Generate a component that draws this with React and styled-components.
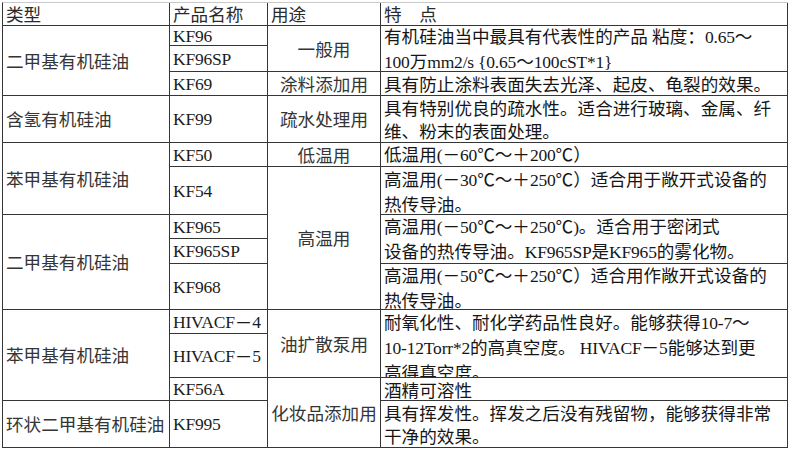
import React from "react";
import styled, { createGlobalStyle } from "styled-components";

const GlobalStyle = createGlobalStyle`
  body {
    margin: 0;
    background: #ffffff;
    font-family: "Noto Sans CJK SC", "Noto Sans", sans-serif;
  }
`;

// line positions measured off the sheet: each track includes its bottom border
const ROW_HEIGHTS = [23, 20, 26, 24, 47, 24, 48, 24, 25, 46, 24, 44, 23, 47];

const Sheet = styled.div`
  display: grid;
  grid-template-columns: 167px 98px 113px 407px;
  grid-template-rows: ${ROW_HEIGHTS.map((h) => `${h}px`).join(" ")};
  width: max-content;
  margin: 2px 0 0 2px;
  border-left: 1px solid #363636;
  border-top: 1px solid #c9c9c9;
  font-size: 17.6px;
  line-height: 22px;
  color: #222;
`;

const Cell = styled.div`
  grid-row: span ${(p) => p.$span || 1};
  box-sizing: border-box;
  min-width: 0;
  overflow: hidden;
  display: flex;
  align-items: center;
  border-right: 1px solid #363636;
  border-bottom: 1px solid #363636;
  white-space: nowrap;
`;

const HeadCell = styled(Cell)`
  padding-left: 3px;
  color: #2a2a2a;
`;

const TypeCell = styled(Cell)`
  padding-left: 3px;
  color: #353535;
`;

const CodeCell = styled(Cell)`
  padding-left: 3px;
  color: #1c1c1c;
`;

const UseCell = styled(Cell)`
  justify-content: center;
  color: #353535;
`;

const NoteCell = styled(Cell)`
  flex-direction: column;
  align-items: flex-start;
  justify-content: ${(p) => (p.$top ? "flex-start" : "center")};
  padding-left: 3px;
  color: #161616;
  line-height: ${(p) => p.$lh || 23}px;
`;

const Line = styled.div`
  flex: none;
  white-space: nowrap;
`;

const Latin = styled.span`
  font-family: "Liberation Serif", serif;
  font-size: 17.5px;
  letter-spacing: -0.2px;
`;

const mix = (text) =>
  text
    .split(/([ -~]+)/)
    .filter(Boolean)
    .map((part, i) =>
      /^[ -~]+$/.test(part) ? <Latin key={i}>{part}</Latin> : part
    );

const Note = ({ lines, ...rest }) => (
  <NoteCell {...rest}>
    {lines.map((l, i) => (
      <Line key={i}>{mix(l)}</Line>
    ))}
  </NoteCell>
);

const Code = ({ children }) => <CodeCell>{mix(children)}</CodeCell>;

export default function App() {
  return (
    <>
      <GlobalStyle />
      <Sheet>
        <HeadCell>类型</HeadCell>
        <HeadCell>产品名称</HeadCell>
        <HeadCell>用途</HeadCell>
        <HeadCell>特　点</HeadCell>

        <TypeCell $span={3}>二甲基有机硅油</TypeCell>
        <Code>KF96</Code>
        <UseCell $span={2}>一般用</UseCell>
        <Note
          $span={2}
          lines={[
            "有机硅油当中最具有代表性的产品 粘度：0.65～",
            "100万mm2/s {0.65～100cST*1}",
          ]}
        />
        <Code>KF96SP</Code>
        <Code>KF69</Code>
        <UseCell>涂料添加用</UseCell>
        <Note lines={["具有防止涂料表面失去光泽、起皮、龟裂的效果。"]} />

        <TypeCell>含氢有机硅油</TypeCell>
        <Code>KF99</Code>
        <UseCell>疏水处理用</UseCell>
        <Note
          lines={[
            "具有特别优良的疏水性。适合进行玻璃、金属、纤",
            "维、粉末的表面处理。",
          ]}
        />

        <TypeCell $span={2}>苯甲基有机硅油</TypeCell>
        <Code>KF50</Code>
        <UseCell>低温用</UseCell>
        <Note lines={["低温用(－60℃～＋200℃）"]} />
        <Code>KF54</Code>
        <UseCell $span={4}>高温用</UseCell>
        <Note
          lines={["高温用(－30℃～＋250℃）适合用于敞开式设备的", "热传导油。"]}
        />

        <TypeCell $span={3}>二甲基有机硅油</TypeCell>
        <Code>KF965</Code>
        <Note
          $span={2}
          lines={[
            "高温用(－50℃～＋250℃)。适合用于密闭式",
            "设备的热传导油。KF965SP是KF965的雾化物。",
          ]}
        />
        <Code>KF965SP</Code>
        <Code>KF968</Code>
        <Note
          lines={["高温用(－50℃～＋250℃）适合用作敞开式设备的", "热传导油。"]}
        />

        <TypeCell $span={3}>苯甲基有机硅油</TypeCell>
        <Code>HIVACF－4</Code>
        <UseCell $span={2}>油扩散泵用</UseCell>
        <Note
          $span={2}
          $top
          $lh={24}
          lines={[
            "耐氧化性、耐化学药品性良好。能够获得10-7～",
            "10-12Torr*2的高真空度。 HIVACF－5能够达到更",
            "高得真空度。",
          ]}
        />
        <Code>HIVACF－5</Code>
        <Code>KF56A</Code>
        <UseCell $span={2}>化妆品添加用</UseCell>
        <Note lines={["酒精可溶性"]} />

        <TypeCell>环状二甲基有机硅油</TypeCell>
        <Code>KF995</Code>
        <Note
          lines={[
            "具有挥发性。挥发之后没有残留物，能够获得非常",
            "干净的效果。",
          ]}
        />
      </Sheet>
    </>
  );
}
